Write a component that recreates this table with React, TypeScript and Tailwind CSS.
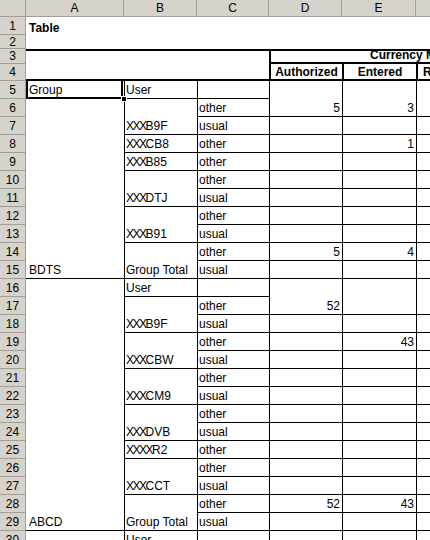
import clsx from 'clsx'

type Col = 'A' | 'B' | 'C' | 'D' | 'E' | 'F'

// grid row for sheet row n is n + 1 (row 1 of the grid is the column header strip)
const ROW = [
  'row-start-1', 'row-start-2', 'row-start-3', 'row-start-4', 'row-start-5', 'row-start-6',
  'row-start-7', 'row-start-8', 'row-start-9', 'row-start-10', 'row-start-11', 'row-start-12',
  'row-start-13', 'row-start-14', 'row-start-15', 'row-start-16', 'row-start-17', 'row-start-18',
  'row-start-19', 'row-start-20', 'row-start-21', 'row-start-22', 'row-start-23', 'row-start-24',
  'row-start-25', 'row-start-26', 'row-start-27', 'row-start-28', 'row-start-29', 'row-start-30',
  'row-start-31',
]

const COL: Record<Col, string> = {
  A: 'col-start-2',
  B: 'col-start-3',
  C: 'col-start-4',
  D: 'col-start-5',
  E: 'col-start-6',
  F: 'col-start-7',
}

const SPAN: Record<number, string> = {
  1: 'row-span-1',
  2: 'row-span-2',
  10: 'row-span-10',
  14: 'row-span-14',
}

const users: [number, number, string][] = [
  [5, 1, 'User'],
  [6, 2, 'XXXB9F'],
  [8, 1, 'XXXCB8'],
  [9, 1, 'XXXB85'],
  [10, 2, 'XXXDTJ'],
  [12, 2, 'XXXB91'],
  [14, 2, 'Group Total'],
  [16, 1, 'User'],
  [17, 2, 'XXXB9F'],
  [19, 2, 'XXXCBW'],
  [21, 2, 'XXXCM9'],
  [23, 2, 'XXXDVB'],
  [25, 1, 'XXXXR2'],
  [26, 2, 'XXXCCT'],
  [28, 2, 'Group Total'],
  [30, 1, 'User'],
]

const kinds: Record<number, string> = {
  5: '', 6: 'other', 7: 'usual', 8: 'other', 9: 'other', 10: 'other', 11: 'usual',
  12: 'other', 13: 'usual', 14: 'other', 15: 'usual', 16: '', 17: 'other', 18: 'usual',
  19: 'other', 20: 'usual', 21: 'other', 22: 'usual', 23: 'other', 24: 'usual',
  25: 'other', 26: 'other', 27: 'usual', 28: 'other', 29: 'usual', 30: '',
}

const numbers: Record<string, string> = {
  D5: '5', E5: '3', E8: '1', D14: '5', E14: '4',
  D16: '52', E19: '43', D28: '52', E28: '43',
}

// value rows: the "User" row is merged with the row under it
const valueBlocks: [number, number][] = [
  [5, 2], [7, 1], [8, 1], [9, 1], [10, 1], [11, 1], [12, 1], [13, 1], [14, 1], [15, 1],
  [16, 2], [18, 1], [19, 1], [20, 1], [21, 1], [22, 1], [23, 1], [24, 1], [25, 1],
  [26, 1], [27, 1], [28, 1], [29, 1], [30, 1],
]

const head = 'flex items-center justify-center border-r border-b border-[#a19e96] bg-[#d6d3cc] text-black'
const cell = 'flex items-end whitespace-nowrap border-b border-l border-black pb-px pl-px'

function UserId({ text }: { text: string }) {
  const m = text.match(/^(X+)(.*)$/)
  if (!m) return <>{text}</>
  return (
    <>
      <span className="tracking-[-1.5px]">{m[1]}</span>
      {m[2]}
    </>
  )
}

export default function App() {
  const rowNums = Array.from({ length: 30 }, (_, i) => i + 1)
  const cols: Col[] = ['A', 'B', 'C', 'D', 'E', 'F']

  return (
    <div className="relative h-[540px] w-[430px] overflow-hidden bg-white font-['Liberation_Sans',Arial,sans-serif] text-[12px] leading-[14px] text-black">
      <div className="grid w-[490px] grid-cols-[26px_98px_73px_72px_73px_74px_74px] grid-rows-[17px_18px_14px_15px_17px_18px_repeat(25,18px)]">
        {/* corner + column headers */}
        <div className={clsx(head, 'col-start-1 row-start-1')} />
        {cols.map((c) => (
          <div key={c} className={clsx(head, COL[c], ROW[0], c === 'A' && 'bg-[#b6bdd2]')}>
            {c}
          </div>
        ))}

        {/* row headers */}
        {rowNums.map((n) => (
          <div key={n} className={clsx(head, 'col-start-1', ROW[n], n === 5 && 'bg-[#b6bdd2]')}>
            {n}
          </div>
        ))}

        {/* title */}
        <div className={clsx('col-start-2 flex items-end whitespace-nowrap pl-[3px] font-bold', ROW[1])}>
          Table
        </div>

        {/* column group header */}
        <div className={clsx('col-span-3 col-start-2 row-span-2 border-t-2 border-b-2 border-black', ROW[3])} />
        <div
          className={clsx(
            'col-span-3 col-start-5 flex items-end whitespace-nowrap border-t-2 border-b-2 border-l-2 border-black pl-[99px] font-bold',
            ROW[3],
          )}
        >
          Currency Movement
        </div>
        <div className={clsx('col-start-5 flex items-end justify-center border-b-2 border-l-2 border-black font-bold', ROW[4])}>
          Authorized
        </div>
        <div className={clsx('col-start-6 flex items-end justify-center border-b-2 border-l-2 border-black font-bold', ROW[4])}>
          Entered
        </div>
        <div className={clsx('col-start-7 flex items-end whitespace-nowrap border-b-2 border-l-2 border-black pl-[5px] font-bold', ROW[4])}>
          Rejected
        </div>

        {/* column A: groups */}
        <div className={clsx('relative col-start-2 flex items-end pb-[2px] pl-[3px]', ROW[5])}>
          Group
          <div className="absolute -top-[2px] bottom-0 left-0 right-px border-2 border-black" />
          <div className="absolute -bottom-[3px] -right-[3px] z-10 h-[6px] w-[6px] border border-white bg-black" />
        </div>
        <div className={clsx('col-start-2 flex items-end border-b border-black pb-px pl-[3px]', ROW[6], SPAN[10])}>
          BDTS
        </div>
        <div className={clsx('col-start-2 flex items-end border-b border-black pb-px pl-[3px]', ROW[16], SPAN[14])}>
          ABCD
        </div>
        <div className={clsx('col-start-2 border-b border-black', ROW[30])} />

        {/* column B: users */}
        {users.map(([r, s, t]) => (
          <div key={'B' + r} className={clsx(cell, COL.B, ROW[r], SPAN[s])}>
            <UserId text={t} />
          </div>
        ))}

        {/* column C: kind */}
        {Object.entries(kinds).map(([r, t]) => (
          <div key={'C' + r} className={clsx(cell, COL.C, ROW[Number(r)])}>
            {t}
          </div>
        ))}

        {/* columns D, E, F: values */}
        {(['D', 'E', 'F'] as Col[]).map((c) =>
          valueBlocks.map(([r, s]) => (
            <div key={c + r} className={clsx(cell, 'justify-end pr-[2px]', COL[c], ROW[r], SPAN[s])}>
              {numbers[c + r] ?? ''}
            </div>
          )),
        )}
      </div>
    </div>
  )
}
